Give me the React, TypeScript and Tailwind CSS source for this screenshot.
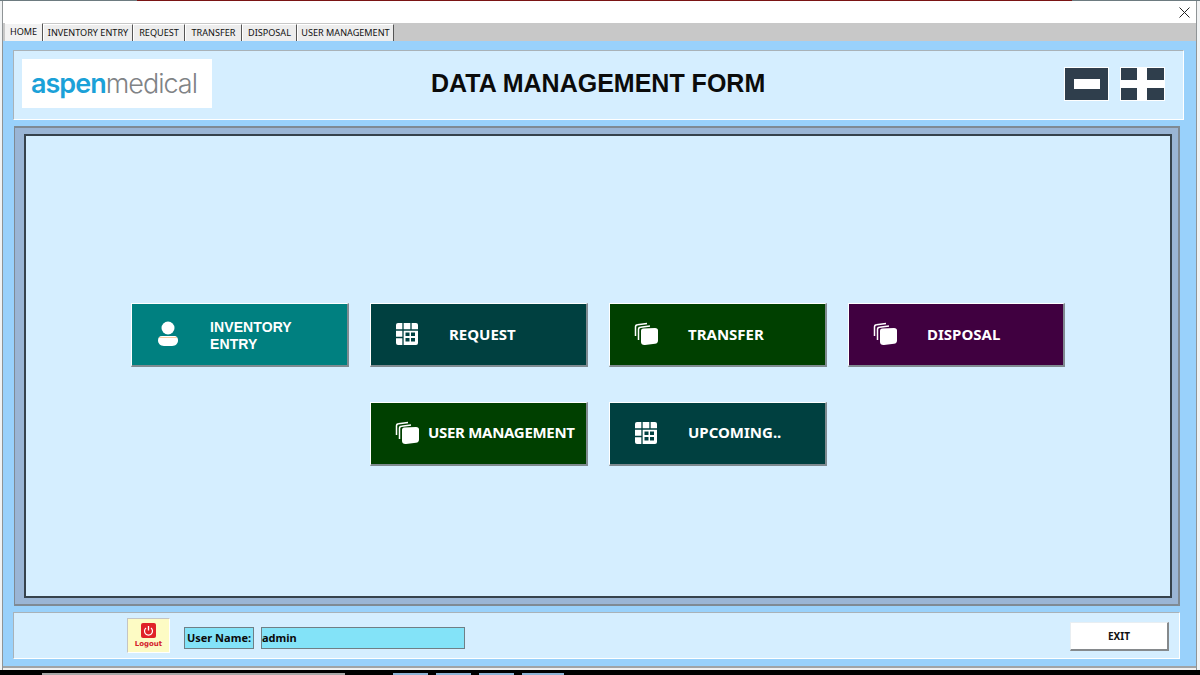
const tabs = [
  { label: 'INVENTORY ENTRY', width: 'w-[90px]' },
  { label: 'REQUEST', width: 'w-[52px]' },
  { label: 'TRANSFER', width: 'w-[57px]' },
  { label: 'DISPOSAL', width: 'w-[55px]' },
  { label: 'USER MANAGEMENT', width: 'w-[97px]' },
];

const UserIcon = () => (
  <svg width="22" height="26" viewBox="0 0 22 26" fill="#fff">
    <circle cx="11" cy="7" r="6.500" />
    <path d="M5 15h12c3 0 4 2 4 4.500S19 25 15 25H7c-4 0-6-3-6-5.500S2 15 5 15z" />
    <path d="M2 16.500h18" stroke="#f5c28a" strokeWidth="0.8" />
  </svg>
);

const GridIcon = () => (
  <svg width="22" height="22" viewBox="0 0 22 22">
    <rect x="0" y="0" width="22" height="22" rx="2" fill="#fff" />
    <path d="M7 0v7M15 0v7M0 7h22M0 14.500h7M7 7v15" stroke="currentColor" strokeWidth="1.300" fill="none" />
    <rect x="9.500" y="9.500" width="4" height="3.500" fill="currentColor" />
    <rect x="15" y="9.500" width="4" height="3.500" fill="currentColor" />
    <rect x="9.500" y="15" width="4" height="3.500" fill="currentColor" />
    <rect x="15" y="15" width="4" height="3.500" fill="currentColor" />
  </svg>
);

const StackIcon = () => (
  <svg width="25" height="24" viewBox="0 0 25 24" fill="none">
    <path d="M1.500 14V5c0-1.500.7-2.200 2-2.300L13 1.500" stroke="#fff" strokeWidth="1.500" />
    <path d="M4.500 18V7.500c0-1.500.7-2.200 2-2.300L16 4" stroke="#fff" strokeWidth="1.500" />
    <path d="M7 9c0-1.500.8-2.300 2.200-2.400L21 6c2 0 3 1 3 2.500v10c0 2-1 3-3 3.200L11 23c-2.500.2-4-1-4-3z" fill="#fff" />
  </svg>
);

const MenuButton = ({ className, icon, iconBox, label, labelClass }: { className: string; icon: React.ReactNode; iconBox: string; label: React.ReactNode; labelClass: string }) => (
  <div className={`flex items-center h-[64px] pb-px border border-t-white border-l-white border-r-[#7f8a90] border-b-[#7f8a90] border-r-2 border-b-2 text-white ${className}`}>
    <div className={`flex items-center ${iconBox}`}>{icon}</div>
    <div className={labelClass}>{label}</div>
  </div>
);

const tahoma = 'font-["Noto_Sans",sans-serif] font-bold text-[15px] leading-none';

export default function App() {
  return (
    <div className='w-[1200px] h-[675px] overflow-hidden flex flex-col bg-[#f1f3f4] font-["Liberation_Sans",sans-serif]'>
      <div className="flex h-px shrink-0 bg-[#6d7b80]">
        <div className="w-[137px]" />
        <div className="w-[935px] bg-[#7a1414]" />
      </div>

      <div className="flex-1 flex flex-col min-h-0 ml-[2px] mr-[3px] border-x border-[#8f9496] bg-white">
        <div className="h-[22px] shrink-0 flex items-center justify-end pr-[6px] bg-white">
          <svg width="11" height="11" viewBox="0 0 11 11" stroke="#222" strokeWidth="1" fill="none">
            <path d="M.5.500l10 10M10.500.500l-10 10" />
          </svg>
        </div>

        <div className="h-[18px] shrink-0 flex items-end pl-[2px] bg-[#c8c8c8] font-['Noto_Sans',sans-serif] text-[9.100px] text-[#111]">
          <div className="h-[18px] w-[38px] pb-[2px] flex items-center justify-center bg-[#f2f2f2] border-t border-white border-r border-r-[#555]">HOME</div>
          {tabs.map(t => (
            <div key={t.label} className={`h-[17px] flex items-center justify-center bg-[#ededed] border-t border-white border-r border-r-[#555] border-l border-l-white whitespace-nowrap ${t.width}`}>{t.label}</div>
          ))}
        </div>

        <div className="flex-1 flex flex-col min-h-0 bg-[#99d1fb] pl-[10px] pt-[9px]">
          <div className="h-[70px] mr-[12px] shrink-0 flex items-start bg-[#d5eeff] border border-[#a9b2b8] border-r-white border-b-white pt-[8px] pl-[8px] pr-[18px]">
            <div className="w-[190px] h-[49px] pr-[6px] flex items-center justify-center bg-white tracking-[-1px] text-[27px] leading-none font-['Inter',sans-serif]">
              <span className="font-semibold text-[#1ba1d8]">aspen</span>
              <span className="font-light text-[#7f8386]">medical</span>
            </div>
            <div className="ml-[219px] mt-[9px] text-[25px] leading-[30px] font-bold text-[#0b0b0b] whitespace-nowrap">DATA MANAGEMENT FORM</div>
            <div className="ml-auto mt-[8px] flex gap-[11px]">
              <div className="w-[45px] h-[34px] flex items-center justify-center bg-[#2f3e4c] border border-white">
                <div className="w-[26px] h-[10px] bg-white" />
              </div>
              <div className="w-[45px] h-[34px] bg-[#2f3e4c] border border-white">
                <svg width="43" height="32" viewBox="0 0 43 32" fill="#fff">
                  <rect x="16" y="0" width="10" height="32" />
                  <rect x="0" y="12" width="43" height="8" />
                </svg>
              </div>
            </div>
          </div>

          <div className="h-[480px] mt-[6px] ml-px mr-[16px] shrink-0 flex bg-[#9ab5d5] border-t-2 border-l border-r-2 border-b-2 border-[#7f8a94] pt-[6px] pb-[6px] pl-[9px] pr-[6px]">
            <div className="flex-1 bg-[#d5eeff] border-2 border-[#36424c] pt-[167px] pl-[105px]">
              <div className="grid grid-cols-[218px_218px_218px_217px] gap-x-[21px] gap-y-[35px]">
                <MenuButton className="bg-[#008080]" icon={<UserIcon />} iconBox="w-[78px] pl-[25px]" label={<>INVENTORY<br />ENTRY</>} labelClass='pt-[3px] font-bold text-[14px] leading-[17px] tracking-[0.1px]' />
                <MenuButton className="bg-[#004040]" icon={<span className="text-[#004040]"><GridIcon /></span>} iconBox="w-[78px] pl-[25px]" label="REQUEST" labelClass={tahoma} />
                <MenuButton className="bg-[#004000]" icon={<StackIcon />} iconBox="w-[78px] pl-[24px]" label="TRANSFER" labelClass={tahoma} />
                <MenuButton className="bg-[#400040]" icon={<StackIcon />} iconBox="w-[78px] pl-[24px]" label="DISPOSAL" labelClass={tahoma} />
                <MenuButton className="col-start-2 bg-[#004000]" icon={<StackIcon />} iconBox="w-[57px] pl-[24px]" label="USER MANAGEMENT" labelClass={`${tahoma} pb-[2px] tracking-[-0.3px] whitespace-nowrap`} />
                <MenuButton className="bg-[#004040]" icon={<span className="text-[#004040]"><GridIcon /></span>} iconBox="w-[78px] pl-[25px]" label="UPCOMING.." labelClass={`${tahoma} pb-[2px]`} />
              </div>
            </div>
          </div>

          <div className="h-[47px] mt-[6px] mr-[16px] shrink-0 flex items-center bg-[#d5eeff] border border-[#a9b2b8] border-r-white border-b-white pl-[113px] pr-[10px]">
            <div className="w-[43px] h-[35px] flex flex-col items-center justify-center bg-[#fdfbc4] border border-[#c4c4c4] border-r-white border-b-white">
              <svg width="15" height="15" viewBox="0 0 15 15">
                <rect width="15" height="15" rx="2" fill="#e02128" />
                <path d="M7.500 3v4.500" stroke="#fff" strokeWidth="1.300" />
                <path d="M5 5a4 4 0 1 0 5 0" stroke="#fff" strokeWidth="1.200" fill="none" />
              </svg>
              <div className="text-[7px] leading-[10px] mt-px font-bold text-[#d3202a] font-['DejaVu_Sans',sans-serif]">Logout</div>
            </div>
            <div className="ml-[14px] w-[70px] h-[22px] mt-[5px] flex items-center justify-center bg-[#83e3f8] border border-[#6f7f86] text-[11px] font-bold text-[#0a0a0a] font-['Noto_Sans',sans-serif] whitespace-nowrap">User Name:</div>
            <div className="ml-[7px] w-[204px] h-[22px] mt-[5px] flex items-center bg-[#83e3f8] border border-[#6f7f86] text-[11px] font-bold text-[#0a0a0a] font-['Noto_Sans',sans-serif]">admin</div>
            <div className="ml-auto w-[99px] h-[29px] mt-[1px] pt-[2px] flex items-center justify-center bg-white border border-t-[#e8eef2] border-l-[#e8eef2] border-r-2 border-b-2 border-r-[#85898c] border-b-[#85898c] text-[10px] font-bold text-[#111] font-['Noto_Sans',sans-serif]">EXIT</div>
          </div>
        </div>
        <div className="h-[2px] shrink-0 bg-[#a0a4a6]" />
        <div className="h-[2px] shrink-0 bg-[#f0f0f0]" />
      </div>

      <div className="h-[5px] shrink-0 flex items-end bg-black">
        <div className="ml-[42px] w-[303px] h-[2px] bg-[#a8a8a8]" />
        <div className="ml-[48px] w-[35px] h-[2px] bg-[#8eb4d6]" />
        <div className="ml-[8px] w-[35px] h-[2px] bg-[#8eb4d6]" />
        <div className="ml-[8px] w-[35px] h-[2px] bg-[#8eb4d6]" />
        <div className="ml-[8px] w-[42px] h-[2px] bg-[#8eb4d6]" />
      </div>
    </div>
  );
}
